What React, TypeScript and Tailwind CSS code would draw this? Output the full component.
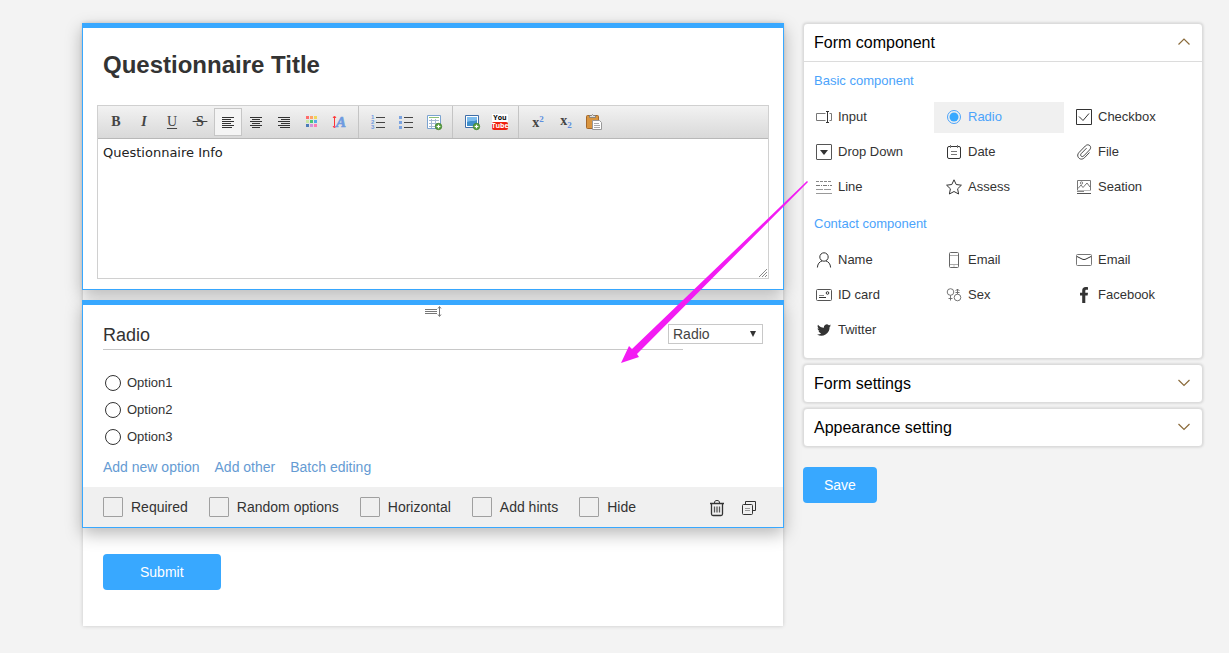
import { useState } from 'react';
import type { ReactNode } from 'react';

type Item = { id: string; label: string; icon: ReactNode };

/** 16px icon wrapper, every path uses the current text colour */
function Icon({ children, className = 'w-4 h-4' }: { children: ReactNode; className?: string }) {
  return (
    <svg viewBox="0 0 16 16" className={`${className} overflow-visible`} fill="none" stroke="currentColor" aria-hidden="true">
      {children}
    </svg>
  );
}

const basicItems: Item[] = [
  {
    id: 'input',
    label: 'Input',
    icon: (
      <Icon>
        <path d="M9.500 4.500h-9v7h9M13.500 4.500h2v7h-2" stroke="#777" />
        <path d="M11.500 2.500v11M10 2.500h3M10 13.500h3" />
      </Icon>
    ),
  },
  {
    id: 'radio',
    label: 'Radio',
    icon: (
      <Icon>
        <circle cx="8" cy="8" r="6.500" />
        <circle cx="8" cy="8" r="4.500" fill="#38a8ff" stroke="none" />
      </Icon>
    ),
  },
  {
    id: 'checkbox',
    label: 'Checkbox',
    icon: (
      <Icon>
        <path d="M.5.5h15v15H.5z" />
        <path d="M3 7.500l4 4 6-7" />
      </Icon>
    ),
  },
  {
    id: 'dropdown',
    label: 'Drop Down',
    icon: (
      <Icon>
        <rect x=".5" y=".5" width="15" height="15" rx=".5" stroke="#555" />
        <path d="M4 6h8l-4 5z" fill="currentColor" stroke="none" />
      </Icon>
    ),
  },
  {
    id: 'date',
    label: 'Date',
    icon: (
      <Icon>
        <rect x="1.500" y="2.500" width="13" height="12" rx="1.500" />
        <path d="M4.500 1v3M11.500 1v3" stroke="#777" />
        <path d="M5 7.500h6M5 10.500h6" stroke="#777" />
      </Icon>
    ),
  },
  {
    id: 'file',
    label: 'File',
    icon: (
      <Icon>
        <path
          d="M13.500 8.500l-5 5.200c-2 2-4.600 1.800-6-.1-1.300-1.700-1-3.500.6-5.200L9.300 2c1.500-1.500 3.300-1.500 4.500-.4 1.200 1.200 1.100 2.900-.2 4.300l-5.800 6c-.9.900-2 .9-2.700.2-.7-.7-.6-1.700.2-2.600l5.300-5.400"
          strokeWidth=".9"
        />
      </Icon>
    ),
  },
  {
    id: 'line',
    label: 'Line',
    icon: (
      <Icon>
        <path d="M0 2.500h16" strokeDasharray="3 1" stroke="#888" />
        <path d="M0 6.500h16" strokeDasharray="4 1 1 1" stroke="#777" />
        <path d="M0 10.500h16" strokeDasharray="7 1" stroke="#999" />
        <path d="M0 14.500h16" stroke="#999" />
      </Icon>
    ),
  },
  {
    id: 'assess',
    label: 'Assess',
    icon: (
      <Icon>
        <path d="M8 .8l2.200 4.700 5.200.7-3.800 3.600 1 5.200L8 12.500 3.400 15l1-5.200L.6 6.200l5.200-.7z" />
      </Icon>
    ),
  },
  {
    id: 'seation',
    label: 'Seation',
    icon: (
      <Icon>
        <path d="M1.500 11v-9.500h13V11" stroke="#777" />
        <path d="M1 11.500h14" stroke="#bbb" />
        <path d="M2 9.500l3-3.500 2 2.500L11 4l3 4" strokeWidth=".9" stroke="#666" />
        <circle cx="5.500" cy="4" r="1.200" strokeWidth=".8" stroke="#666" />
        <path d="M1 12.500h7" stroke="#888" />
        <path d="M1 14.500h14" stroke="#555" />
      </Icon>
    ),
  },
];

const contactItems: Item[] = [
  {
    id: 'name',
    label: 'Name',
    icon: (
      <Icon>
        <circle cx="8" cy="5" r="4.200" />
        <path d="M1.400 15.500c.2-3.600 2-5.800 4.800-6.600M14.600 15.500c-.2-3.600-2-5.800-4.800-6.600" />
      </Icon>
    ),
  },
  {
    id: 'phone',
    label: 'Email',
    icon: (
      <Icon>
        <rect x="3.500" y=".5" width="9" height="15" rx="1" stroke="#666" />
        <path d="M4 3.500h8M4 12.500h8" stroke="#aaa" />
        <path d="M7.500 14h1" stroke="#888" />
      </Icon>
    ),
  },
  {
    id: 'email',
    label: 'Email',
    icon: (
      <Icon>
        <rect x=".5" y="2.500" width="15" height="11" rx="1" stroke="#777" />
        <path d="M1 4.500l5 2.500c1.300.7 2.700.7 4 0l5-2.500" />
      </Icon>
    ),
  },
  {
    id: 'idcard',
    label: 'ID card',
    icon: (
      <Icon>
        <rect x=".5" y="2.500" width="15" height="11" rx="1" stroke="#555" />
        <path d="M3 8.500h5" stroke="#888" />
        <path d="M3 10.500h7" />
        <circle cx="11.500" cy="6" r="1.300" />
      </Icon>
    ),
  },
  {
    id: 'sex',
    label: 'Sex',
    icon: (
      <Icon>
        <g strokeWidth=".9" stroke="#666">
          <circle cx="4.500" cy="5" r="3.300" />
          <path d="M4.500 8.300v5.200M2.500 11.500h4" />
          <circle cx="11.500" cy="10.500" r="3.300" />
          <path d="M11.500 7.200V2M9.500 4l2-2 2 2M9.500 5.500h4" />
        </g>
      </Icon>
    ),
  },
  {
    id: 'facebook',
    label: 'Facebook',
    icon: (
      <Icon>
        <path
          d="M12 .2v2.600h-1.500c-.9 0-1.200.4-1.200 1.200v1.700H12l-.4 2.700H9.300V16H6.200V8.400H4V5.700h2.200V3.600C6.200 1.300 7.500 0 9.700 0 10.700 0 11.600.1 12 .2z"
          fill="currentColor"
          stroke="none"
        />
      </Icon>
    ),
  },
  {
    id: 'twitter',
    label: 'Twitter',
    icon: (
      <Icon>
        <path
          d="M15 3.600c-.5.200-1 .4-1.600.5.600-.4 1-.9 1.200-1.600-.5.300-1.100.6-1.800.7a2.900 2.900 0 0 0-4.900 2.600C5.600 5.700 3.500 4.600 2 2.800c-.8 1.300-.4 3 .9 3.800-.5 0-.9-.1-1.300-.3 0 1.400 1 2.500 2.300 2.800-.4.1-.9.100-1.300.1.400 1.100 1.400 1.900 2.700 2A5.800 5.800 0 0 1 1 12.400a8.200 8.200 0 0 0 12.600-7.300c.6-.4 1-.9 1.400-1.500z"
          fill="currentColor"
          stroke="none"
        />
      </Icon>
    ),
  },
];

/* ---- editor toolbar ---- */

function Lines({ widths, align }: { widths: number[]; align: 'left' | 'center' | 'right' }) {
  return (
    <Icon>
      {widths.map((w, i) => {
        const x = align === 'left' ? 2 : align === 'right' ? 14 - w : 8 - w / 2;
        return <path key={i} d={`M${x} ${3.5 + i * 2}h${w}`} stroke="#333" />;
      })}
    </Icon>
  );
}

function PlusBadge() {
  return (
    <>
      <circle cx="12.500" cy="12.500" r="3.200" fill="#5fa345" stroke="#3f7f2b" strokeWidth=".8" />
      <path d="M10.700 12.500h3.600M12.500 10.700v3.600" stroke="#fff" strokeWidth="1.200" />
    </>
  );
}

const glyph = "font-['Liberation_Serif',serif] text-sm leading-4 text-[#444]";
const rows = [12, 9, 12, 9, 12, 10];
const swatches = ['#ff6b6b', '#ffa368', '#f0d75a', '#c9e8a4', '#48c774', '#55a8e8', '#4d7bb8', '#d292dd', '#ff7bb0'];

const toolGroups: { name: string; icon: ReactNode }[][] = [
  [
    { name: 'Bold', icon: <span className={`${glyph} font-bold`}>B</span> },
    { name: 'Italic', icon: <span className={`${glyph} font-bold italic`}>I</span> },
    { name: 'Underline', icon: <span className={`${glyph} underline underline-offset-2`}>U</span> },
    { name: 'Strikethrough', icon: <span className={`${glyph} font-bold line-through`}>&nbsp;S&nbsp;</span> },
    { name: 'Align left', icon: <Lines widths={rows} align="left" /> },
    { name: 'Align center', icon: <Lines widths={[12, 8, 12, 8, 12, 8]} align="center" /> },
    { name: 'Align right', icon: <Lines widths={rows} align="right" /> },
    {
      name: 'Font color',
      icon: (
        <Icon>
          {swatches.map((c, i) => (
            <rect key={c} x={2 + (i % 3) * 4} y={2 + Math.floor(i / 3) * 4} width="3" height="3" fill={c} stroke="none" />
          ))}
        </Icon>
      ),
    },
    {
      name: 'Font size',
      icon: (
        <Icon>
          <path d="M2.500 3v10M1 4l1.500-2L4 4M1 12l1.500 2L4 12" stroke="#f33" />
          <text
            x="4"
            y="13"
            fontSize="15"
            fontWeight="bold"
            fontStyle="italic"
            fontFamily="Liberation Serif, serif"
            fill="#6f9be0"
            stroke="#6f9be0"
            strokeWidth=".6"
          >
            A
          </text>
        </Icon>
      ),
    },
  ],
  [
    {
      name: 'Ordered list',
      icon: (
        <Icon>
          <path d="M6 3.500h9M6 8.500h9M6 13.500h9" stroke="#444" />
          <g fontSize="6" fontWeight="bold" fontFamily="Liberation Sans, sans-serif" fill="#6f9be0" stroke="none">
            <text x="1" y="5">1</text>
            <text x="1" y="10">2</text>
            <text x="1" y="15">3</text>
          </g>
        </Icon>
      ),
    },
    {
      name: 'Bullet list',
      icon: (
        <Icon>
          <path d="M6 3.500h9M6 8.500h9M6 13.500h9" stroke="#444" />
          <path d="M1 2h3v3H1zM1 7h3v3H1zM1 12h3v3H1z" fill="#7ba3e0" stroke="none" />
        </Icon>
      ),
    },
    {
      name: 'Insert table',
      icon: (
        <Icon>
          <path d="M1.500 1.500h13v13h-13z" fill="#fff" stroke="#7aa3d0" />
          <path d="M3 3.500h10" stroke="#8bbf76" />
          <path d="M3 6.500h10M3 9.500h10M3 12.500h7M5.500 5v9M9.500 5v9" stroke="#a3b9d2" />
          <PlusBadge />
        </Icon>
      ),
    },
  ],
  [
    {
      name: 'Insert image',
      icon: (
        <Icon>
          <path d="M1.500 1.500h13v12h-13z" fill="#fff" stroke="#3f6ea8" />
          <path d="M3 3h10v9H3z" fill="#7dbdee" stroke="none" />
          <path d="M3 8c4-2 6 0 10-2v6H3z" fill="#3f8fcc" stroke="none" />
          <PlusBadge />
        </Icon>
      ),
    },
    {
      name: 'Insert video',
      icon: (
        <span className="flex flex-col w-4 text-center font-['Open_Sans',sans-serif] font-bold text-[7px] leading-2">
          <span className="bg-white text-black">You</span>
          <span className="bg-[#f02010] text-white rounded-[2px] flex justify-center">Tube</span>
        </span>
      ),
    },
  ],
  [
    {
      name: 'Superscript',
      icon: (
        <span className={`${glyph} font-bold flex`}>
          <span className="pt-[2px]">x</span>
          <span className="text-[9px] leading-3 text-[#5c8ee0]">2</span>
        </span>
      ),
    },
    {
      name: 'Subscript',
      icon: (
        <span className={`${glyph} font-bold flex`}>
          <span className="pb-[2px]">x</span>
          <span className="pt-[6px] text-[9px] leading-3 text-[#5c8ee0]">2</span>
        </span>
      ),
    },
    {
      name: 'Paste',
      icon: (
        <Icon>
          <rect x=".5" y="1.500" width="12" height="13" rx="1" fill="#d9953f" stroke="#a4672a" />
          <path d="M3.500 3.500v-2h2l1-1 1 1h2v2z" fill="#ddd" stroke="#777" strokeWidth=".8" />
          <path d="M6.500 6.500h7l2 2v7h-9z" fill="#fff" stroke="#999" />
          <path d="M8 9.500h5M8 11.500h6M8 13.500h6" stroke="#aaa" />
        </Icon>
      ),
    },
  ],
];

function Editor() {
  return (
    <div className="mx-[14px] mb-[10px] border border-[#d0d0d0] relative">
      <div className="flex bg-linear-to-b from-[#f2f2f2] to-[#d9d9d9] border-b border-[#b8b8b8]">
        {toolGroups.map((group, g) => (
          <div
            key={g}
            className={`flex px-1 py-[2px] ${g < toolGroups.length - 1 ? 'border-r border-[#c4c4c4] mr-px' : ''}`}
          >
            {group.map((t) => (
              <button
                key={t.name}
                type="button"
                title={t.name}
                aria-label={t.name}
                className={`w-7 h-7 flex items-center justify-center border ${
                  t.name === 'Align left' ? 'bg-[#f4f4f4] border-[#c6c6c6]' : 'border-transparent'
                }`}
              >
                {t.icon}
              </button>
            ))}
          </div>
        ))}
      </div>
      <textarea
        aria-label="Questionnaire info"
        defaultValue="Questionnaire Info"
        className="block w-full h-[139px] px-[5px] py-1 resize-none outline-none font-['DejaVu_Sans',sans-serif] text-[13px] leading-5 text-[#222]"
      />
      {/* resize grip */}
      <svg viewBox="0 0 8 8" className="absolute right-px bottom-px w-2 h-2" stroke="#555" strokeDasharray="1 .4" aria-hidden="true">
        <path d="M0 8L8 0M3 8l5-5M6 8l2-2" />
      </svg>
    </div>
  );
}

const options = ['Option1', 'Option2', 'Option3'];
const settings = ['Required', 'Random options', 'Horizontal', 'Add hints', 'Hide'];
const card = 'bg-white border border-t-[5px] border-[#38a8ff] shadow-[0_6px_16px_rgba(0,0,0,0.28)] -mx-px relative';

function RadioCard() {
  return (
    <div className={`${card} mt-[10px]`}>
      <div className="h-[15px] flex justify-center">
        <svg viewBox="0 0 17 12" className="w-[17px] h-3" fill="none" stroke="#777" aria-hidden="true">
          <path d="M0 4.500h12M0 6.500h12M0 8.500h12" />
          <path d="M14.500 2v9M13 3.500l1.500-2 1.500 2M13 9.500l1.500 2 1.500-2" />
        </svg>
      </div>
      <div className="px-5">
        <div className="flex items-start">
          <input
            aria-label="Question title"
            defaultValue="Radio"
            className="flex-1 min-w-0 h-[30px] pt-px -mr-[15px] border-b border-[#c8c8c8] text-lg text-[#333] outline-none"
          />
          <div className="relative mt-1">
            <select
              aria-label="Question type"
              className="block appearance-none w-[95px] h-5 pl-1 border border-[#c8c8c8] bg-white text-sm leading-[18px] text-[#444]"
            >
              <option>Radio</option>
              <option>Checkbox</option>
            </select>
            <svg viewBox="0 0 6 6" className="absolute right-[7px] top-[7px] w-[6px] h-[6px] pointer-events-none" aria-hidden="true">
              <path d="M0 0h6L3 6z" fill="#333" />
            </svg>
          </div>
        </div>
        <div className="mt-[19px] pl-[2px]">
          {options.map((o) => (
            <label key={o} className="flex items-center gap-[6px] h-[27px] text-[13px] text-[#333]">
              <input type="radio" name="question" className="appearance-none w-4 h-4 rounded-full border border-[#333]" />
              {o}
            </label>
          ))}
        </div>
        <div className="flex gap-[15px] mt-[7px] mb-[10px] text-sm text-[#659bd3]">
          <a href="#add">Add new option</a>
          <a href="#other">Add other</a>
          <a href="#batch">Batch editing</a>
        </div>
      </div>
      <div className="flex items-center h-10 px-5 bg-[#f0f0f0] text-sm text-[#333]">
        <div className="flex gap-[21px] flex-1">
          {settings.map((s) => (
            <label key={s} className="flex items-center gap-2 whitespace-nowrap">
              <input type="checkbox" className="appearance-none w-5 h-5 border border-[#a0a0a0] rounded-[1px]" />
              {s}
            </label>
          ))}
        </div>
        <div className="flex gap-4 mr-[6px]">
          <button type="button" aria-label="Delete">
            <Icon className="block w-4 h-4 mt-[2px]">
              <path d="M1 3.500h14" strokeWidth="1.500" />
              <path d="M5.500 3c0-2 .8-2.500 2.500-2.500s2.500.5 2.500 2.500" />
              <path d="M2.500 4v10c0 1 .5 1.500 1.500 1.500h8c1 0 1.500-.5 1.500-1.500V4" strokeWidth="1.300" />
              <path d="M5.500 6.500v6M8 6.500v6M10.500 6.500v6" strokeWidth="1.300" stroke="#555" />
            </Icon>
          </button>
          <button type="button" aria-label="Duplicate">
            <Icon className="block w-4 h-4 mt-[2px]">
              <path d="M4.500 4V1.500h10v9H12" />
              <rect x="1.500" y="4.500" width="10" height="10" rx="1" />
              <path d="M4 8.500h5M4 10.500h5" stroke="#999" />
            </Icon>
          </button>
        </div>
      </div>
    </div>
  );
}

function Chevron({ up = false }: { up?: boolean }) {
  return (
    <svg viewBox="0 0 12 8" className="w-3 h-2 mb-px" fill="none" stroke="#8a6a3a" strokeWidth="1.200" aria-hidden="true">
      <path d={up ? 'M.5 6.500L6 1l5.500 5.500' : 'M.5 1L6 6.500 11.500 1'} />
    </svg>
  );
}

const panel = 'bg-white border border-[#dcdcdc] rounded shadow-[0_0_3px_rgba(0,0,0,0.18)]';

function PanelHeader({ title, open = false }: { title: string; open?: boolean }) {
  return (
    <button
      type="button"
      aria-expanded={open}
      className="w-full h-[37px] pl-[10px] pr-3 flex items-center justify-between text-base text-black"
    >
      {title}
      <Chevron up={open} />
    </button>
  );
}

function ItemGrid({ items, active, onPick }: { items: Item[]; active: string; onPick: (id: string) => void }) {
  return (
    <div className="grid grid-cols-3 gap-y-1 mt-[11px] mr-2">
      {items.map((it) => (
        <button
          key={it.id}
          type="button"
          onClick={() => onPick(it.id)}
          className={`flex items-center gap-[6px] h-[31px] pl-3 pb-px text-[13px] ${
            it.id === active ? 'bg-[#f0f0f0] text-[#4ba3fb]' : 'text-[#333]'
          }`}
        >
          {it.icon}
          {it.label}
        </button>
      ))}
    </div>
  );
}

export default function App() {
  const [active, setActive] = useState('radio');

  return (
    <div className="min-h-screen bg-[#f3f3f3] pt-[23px] pb-[27px] pl-[82px] pr-[26px] flex items-start gap-[19px] font-['Liberation_Sans',Arial,sans-serif]">
      {/* Form canvas */}
      <main className="flex-1 min-w-0 mx-px bg-white shadow-[0_0_4px_rgba(0,0,0,0.18)] pb-9">
        <div className={card}>
          <h1 className="pl-5 pt-[19px] mb-[22px] text-2xl leading-9 font-bold text-[#333]">Questionnaire Title</h1>
          <Editor />
        </div>
        <RadioCard />
        <button type="button" className="ml-5 mt-[26px] h-9 px-[37px] rounded bg-[#38a8ff] text-white text-sm block">
          Submit
        </button>
      </main>

      {/* Component palette */}
      <aside className="w-[400px] shrink-0 relative">
        <section className={`${panel} pb-3`}>
          <div className="border-b border-[#dcdcdc]">
            <PanelHeader title="Form component" open />
          </div>
          <h2 className="pt-[9px] pl-[10px] text-[13px] leading-5 text-[#4ba3fb]">Basic component</h2>
          <ItemGrid items={basicItems} active={active} onPick={setActive} />
          <h2 className="mt-[11px] pl-[10px] text-[13px] leading-5 text-[#4ba3fb]">Contact component</h2>
          <ItemGrid items={contactItems} active={active} onPick={setActive} />
        </section>
        <section className={`${panel} mt-[5px]`}>
          <PanelHeader title="Form settings" />
        </section>
        <section className={`${panel} mt-[5px]`}>
          <PanelHeader title="Appearance setting" />
        </section>
        <button type="button" className="mt-5 h-9 px-[21px] rounded bg-[#38a8ff] text-white text-sm block">
          Save
        </button>

        {/* drag hint from the palette to the canvas */}
        <svg
          viewBox="0 0 190 184"
          className="absolute left-[-183px] top-[157px] w-[190px] h-[184px] pointer-events-none"
          aria-hidden="true"
        >
          <path d="M1 183l8-17 3 3L187 1l1 1L17 174l2 3z" fill="#f31cf3" />
        </svg>
      </aside>
    </div>
  );
}
